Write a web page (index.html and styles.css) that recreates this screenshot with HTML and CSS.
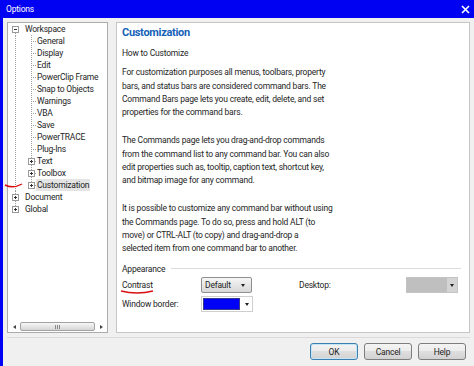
FILE: index.html
```html
<!DOCTYPE html>
<html lang="en">
<head>
    <meta charset="UTF-8">
    <meta name="viewport" content="width=device-width, initial-scale=1.0">
    <title>Options</title>
    <link rel="stylesheet" href="styles.css">
</head>
<body>
    <div class="window">
        <!-- Barra de titulo -->
        <div class="titlebar">
            <span class="title">Options</span>
            <svg class="close" width="9" height="9" viewBox="0 0 9 9">
                <path d="M1 1 L8 8 M8 1 L1 8" stroke="#fff" stroke-width="1.6"/>
            </svg>
        </div>

        <div class="client">
            <div class="main">
                <!-- Arbol de categorias -->
                <div class="tree-panel">
                    <div class="tree">
                        <div class="row root first"><span class="expander minus"></span><span class="label">Workspace</span></div>
                        <div class="kids">
                            <div class="row child"><span class="label">General</span></div>
                            <div class="row child"><span class="label">Display</span></div>
                            <div class="row child"><span class="label">Edit</span></div>
                            <div class="row child"><span class="label">PowerClip Frame</span></div>
                            <div class="row child"><span class="label">Snap to Objects</span></div>
                            <div class="row child"><span class="label">Warnings</span></div>
                            <div class="row child"><span class="label">VBA</span></div>
                            <div class="row child"><span class="label">Save</span></div>
                            <div class="row child"><span class="label">PowerTRACE</span></div>
                            <div class="row child"><span class="label">Plug-Ins</span></div>
                            <div class="row child folder"><span class="expander plus"></span><span class="label">Text</span></div>
                            <div class="row child folder"><span class="expander plus"></span><span class="label">Toolbox</span></div>
                            <div class="row child folder last"><span class="expander plus"></span><span class="label selected">Customization</span></div>
                        </div>
                        <div class="row root mid"><span class="expander plus"></span><span class="label">Document</span></div>
                        <div class="row root last"><span class="expander plus"></span><span class="label">Global</span></div>
                    </div>
                    <div class="hscroll">
                        <span class="arrow-cell"><span class="arrow left"></span></span>
                        <span class="thumb"><span class="grip"></span></span>
                        <span class="arrow-cell"><span class="arrow right"></span></span>
                    </div>
                </div>

                <!-- Pagina de opciones -->
                <div class="page">
                    <h1>Customization</h1>
                    <p class="intro">How to Customize</p>
                    <p>For customization purposes all menus, toolbars, property<br>
                        bars, and status bars are considered command bars. The<br>
                        Command Bars page lets you create, edit, delete, and set<br>
                        properties for the command bars.</p>
                    <p>The Commands page lets you drag-and-drop commands<br>
                        from the command list to any command bar. You can also<br>
                        edit properties such as, tooltip, caption text, shortcut key,<br>
                        and bitmap image for any command.</p>
                    <p class="last">It is possible to customize any command bar without using<br>
                        the Commands page. To do so, press and hold ALT (to<br>
                        move) or CTRL-ALT (to copy) and drag-and-drop a<br>
                        selected item from one command bar to another.</p>

                    <div class="group">
                        <div class="group-title"><span>Appearance</span><span class="rule"></span></div>
                        <div class="fields">
                            <span class="field-label">Contrast</span>
                            <div class="combo"><span>Default</span><span class="arrow down"></span></div>
                            <span class="field-label">Desktop:</span>
                            <div class="color-combo gray"><span class="swatch"></span><span class="drop"><span class="arrow down"></span></span></div>

                            <span class="field-label">Window border:</span>
                            <div class="color-combo"><span class="swatch"></span><span class="drop"><span class="arrow down"></span></span></div>
                        </div>
                    </div>
                </div>
            </div>

            <!-- Botones -->
            <div class="footer">
                <button class="btn default">OK</button>
                <button class="btn">Cancel</button>
                <button class="btn">Help</button>
            </div>
        </div>

        <!-- Marcas rojas a mano -->
        <svg class="marks" width="474" height="366" viewBox="0 0 474 366">
            <path d="M5 185 Q 13 189 22 184" fill="none" stroke="#d81010" stroke-width="1.4"/>
            <path d="M121 291 Q 137 295 153 291" fill="none" stroke="#d81010" stroke-width="1.4"/>
        </svg>
    </div>
</body>
</html>
```

FILE: styles.css
```css
* {
    box-sizing: border-box;
}

body {
    margin: 0;
    font-family: Roboto, "Liberation Sans", sans-serif;
    font-size: 8.5px;
    letter-spacing: -0.2px;
    color: #1e1e1e;
}

.window {
    position: relative;
    width: 474px;
    height: 366px;
    background: #0000f2;
    display: flex;
    flex-direction: column;
    overflow: hidden;
}

.titlebar {
    height: 18px;
    display: flex;
    align-items: center;
    justify-content: space-between;
    padding: 0 4px 0 6px;
    color: #fff;
    font-size: 8.5px;
}

.client {
    flex: 1;
    margin-left: 3px;
    background: #f0f0f0;
    display: flex;
    flex-direction: column;
    padding: 4px 4px 0;
}

.main {
    height: 311px;
    display: flex;
    gap: 8px;
}

/* arbol */
.tree-panel {
    width: 101px;
    border: 1px solid #acacac;
    background: #fff;
    display: flex;
    flex-direction: column;
}

.tree {
    flex: 1;
}

.row {
    height: 12px;
    display: flex;
    align-items: center;
    white-space: nowrap;
    background-repeat: no-repeat;
}

.root {
    padding-left: 4px;
    background-image: repeating-linear-gradient(to bottom, #a0a0a0 0 1px, transparent 1px 2px);
}

.root.first { background-position: 7px 6px; background-size: 1px 6px; }
.root.mid { background-position: 7px 0; background-size: 1px 12px; }
.root.last { background-position: 7px 0; background-size: 1px 6px; }

.root .label {
    margin-left: 5px;
}

.kids {
    margin-left: 7px;
    border-left: 1px dotted #a0a0a0;
}

.child {
    padding-left: 20px;
    background-image:
        repeating-linear-gradient(to bottom, #a0a0a0 0 1px, transparent 1px 2px),
        repeating-linear-gradient(to right, #a0a0a0 0 1px, transparent 1px 2px);
    background-position: 15px 0, 15px 6px;
    background-size: 1px 12px, 6px 1px;
}

.child.last {
    background-size: 1px 6px, 6px 1px;
}

.child.folder {
    padding-left: 12px;
}

.child.folder .label {
    margin-left: 1px;
}

.expander {
    width: 7px;
    height: 7px;
    border: 1px solid #9a9a9a;
    background-color: #fff;
    background-repeat: no-repeat;
    background-position: center;
}

.minus {
    background-image: linear-gradient(#333, #333);
    background-size: 3px 1px;
}

.plus {
    background-image: linear-gradient(#333, #333), linear-gradient(#333, #333);
    background-size: 3px 1px, 1px 3px;
}

.label {
    padding: 0 1px;
    line-height: 12px;
}

.label.selected {
    background: #e4e4e4;
}

.hscroll {
    height: 11px;
    display: flex;
    align-items: center;
}

.arrow-cell {
    width: 12px;
    height: 11px;
    display: flex;
    align-items: center;
    justify-content: center;
}

.arrow {
    width: 0;
    height: 0;
}

.arrow.left {
    border-top: 2px solid transparent;
    border-bottom: 2px solid transparent;
    border-right: 3px solid #444;
}

.arrow.right {
    border-top: 2px solid transparent;
    border-bottom: 2px solid transparent;
    border-left: 3px solid #444;
}

.arrow.down {
    border-left: 2.5px solid transparent;
    border-right: 2.5px solid transparent;
    border-top: 3px solid #222;
}

.thumb {
    flex: 1;
    height: 9px;
    border: 1px solid #a2a2a2;
    border-radius: 2px;
    background: linear-gradient(#f7f7f7, #e6e6e6 50%, #d6d6d6);
    display: flex;
    align-items: center;
    justify-content: center;
}

.grip {
    width: 5px;
    height: 4px;
    background: repeating-linear-gradient(to right, #8a8a8a 0 1px, transparent 1px 2px);
}

/* pagina */
.page {
    flex: 1;
    border: 1px solid #c6c6c6;
    background: #fff;
    display: flex;
    flex-direction: column;
    padding: 3px 8px 20px 5px;
}

.page h1 {
    margin: 0;
    font-size: 11px;
    line-height: 14px;
    font-weight: 700;
    letter-spacing: -0.3px;
    color: #1562b6;
}

.page p {
    margin: 0 0 14.7px;
    line-height: 13.33px;
    white-space: nowrap;
}

.page p.intro {
    margin: 7.3px 0 5.6px;
}

.page p.last {
    margin-bottom: 0;
}

.group {
    margin-top: auto;
}

.group-title {
    height: 13px;
    display: flex;
    align-items: center;
    gap: 6px;
}

.rule {
    flex: 1;
    height: 1px;
    background: #dcdcdc;
}

.fields {
    display: grid;
    grid-template-columns: 79px 98px 107px 52px;
    row-gap: 3px;
    align-items: center;
    margin-top: 2px;
}

.combo {
    width: 51px;
    height: 16px;
    border: 1px solid #8f8f8f;
    border-radius: 2px;
    background: linear-gradient(#f6f6f6, #e6e6e6 50%, #d8d8d8);
    display: flex;
    align-items: center;
    justify-content: space-between;
    padding: 0 6px 0 3px;
}

.color-combo {
    width: 52px;
    height: 16px;
    border: 1px solid #cfcfcf;
    display: flex;
    background: #fff;
}

.color-combo .swatch {
    width: 37px;
    margin: 1px;
    background: #0000f6;
    border: 1px solid #3a3a8a;
}

.color-combo .drop {
    flex: 1;
    display: flex;
    align-items: center;
    justify-content: center;
}

.color-combo.gray {
    border-color: #c4c4c4;
    background: #d4d4d4;
}

.color-combo.gray .swatch {
    width: 40px;
    margin: 0;
    border: none;
    background: #bfbfbf;
}

/* botones */
.footer {
    flex: 1;
    margin-top: 4px;
    border-top: 1px solid #dadada;
    display: flex;
    justify-content: flex-end;
    align-items: flex-start;
    gap: 6px;
    padding: 5px 4px 0 0;
}

.btn {
    width: 48px;
    height: 17px;
    padding: 0;
    border: 1px solid #7d7d7d;
    border-radius: 3px;
    background: linear-gradient(#f4f4f4, #ececec 45%, #dedede 50%, #d2d2d2);
    font-family: inherit;
    font-size: 8.5px;
    letter-spacing: -0.2px;
    color: #1e1e1e;
}

.btn.default {
    border-color: #3c7fb1;
    box-shadow: inset 0 0 0 1px #c4e5f6;
}

.marks {
    position: absolute;
    left: 0;
    top: 0;
    pointer-events: none;
}
```
